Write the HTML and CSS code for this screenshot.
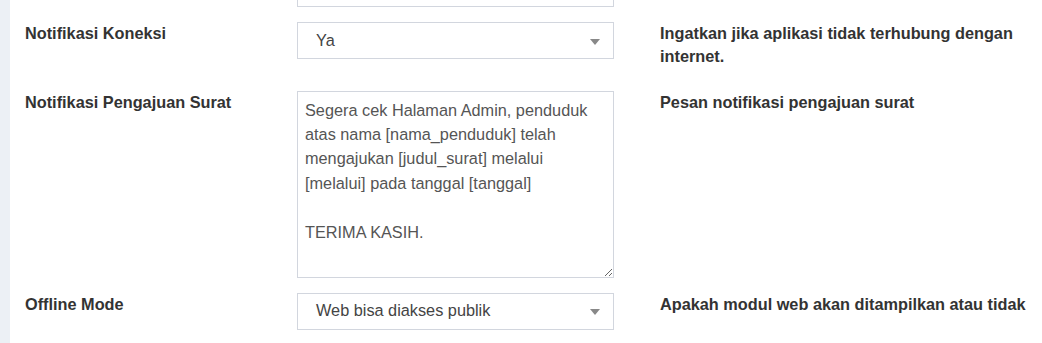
FILE: index.html
```html
<!DOCTYPE html>
<html lang="id">
<head>
<meta charset="utf-8">
<title>Pengaturan</title>
<link rel="stylesheet" href="styles.css">
</head>
<body>
<div class="page">
  <div class="strip"></div>
  <div class="content">
    <div class="form">
      <div class="row">
        <div class="label"></div>
        <div class="field"><div class="box"></div></div>
        <div class="desc"></div>
      </div>
      <div class="row">
        <div class="label">Notifikasi Koneksi</div>
        <div class="field">
          <div class="select"><span class="select-text">Ya</span><span class="arrow"></span></div>
        </div>
        <div class="desc">Ingatkan jika aplikasi tidak terhubung dengan internet.</div>
      </div>
      <div class="row">
        <div class="label">Notifikasi Pengajuan Surat</div>
        <div class="field">
          <textarea class="textarea">Segera cek Halaman Admin, penduduk atas nama [nama_penduduk] telah mengajukan [judul_surat] melalui [melalui] pada tanggal [tanggal]

TERIMA KASIH.</textarea>
        </div>
        <div class="desc">Pesan notifikasi pengajuan surat</div>
      </div>
      <div class="row">
        <div class="label">Offline Mode</div>
        <div class="field">
          <div class="select"><span class="select-text">Web bisa diakses publik</span><span class="arrow"></span></div>
        </div>
        <div class="desc">Apakah modul web akan ditampilkan atau tidak</div>
      </div>
    </div>
  </div>
</div>
</body>
</html>
```
FILE: styles.css
```css
html, body {
  margin: 0;
  padding: 0;
  background: #ffffff;
  overflow: hidden;
}
body {
  font-family: "Liberation Sans", Arial, sans-serif;
  font-size: 16.3px;
  line-height: 23.3px;
  color: #333333;
}
.page {
  display: flex;
  min-height: 343px;
}
.strip {
  width: 10px;
  flex: 0 0 10px;
  background: #ecf0f5;
}
.content {
  flex: 1;
  background: #ffffff;
  padding-left: 15px;
}
.form {
  margin-top: -30px;
  display: flex;
  flex-direction: column;
  gap: 15px;
}
.row {
  display: grid;
  grid-template-columns: 272px 317px 1fr;
  align-items: start;
}
.label {
  font-weight: bold;
}
.desc {
  font-weight: bold;
  padding-left: 46px;
  padding-bottom: 7px;
}
.box {
  height: 37px;
  box-sizing: border-box;
  border: 1px solid #d2d6de;
}
.select {
  height: 37px;
  box-sizing: border-box;
  border: 1px solid #d2d6de;
  display: flex;
  align-items: center;
  justify-content: space-between;
  padding: 0 13px 0 18px;
  color: #444444;
}
.arrow {
  width: 0;
  height: 0;
  border-style: solid;
  border-width: 6px 5.5px 0 5.5px;
  border-color: #888888 transparent transparent transparent;
  margin-top: 2px;
}
.textarea {
  display: block;
  width: 317px;
  height: 187px;
  box-sizing: border-box;
  border: 1px solid #d2d6de;
  padding: 6px 7px;
  margin: 0;
  font-family: "Liberation Sans", Arial, sans-serif;
  font-size: 16.3px;
  line-height: 24.4px;
  color: #555555;
  background: #ffffff;
  resize: vertical;
  outline: none;
}
```
